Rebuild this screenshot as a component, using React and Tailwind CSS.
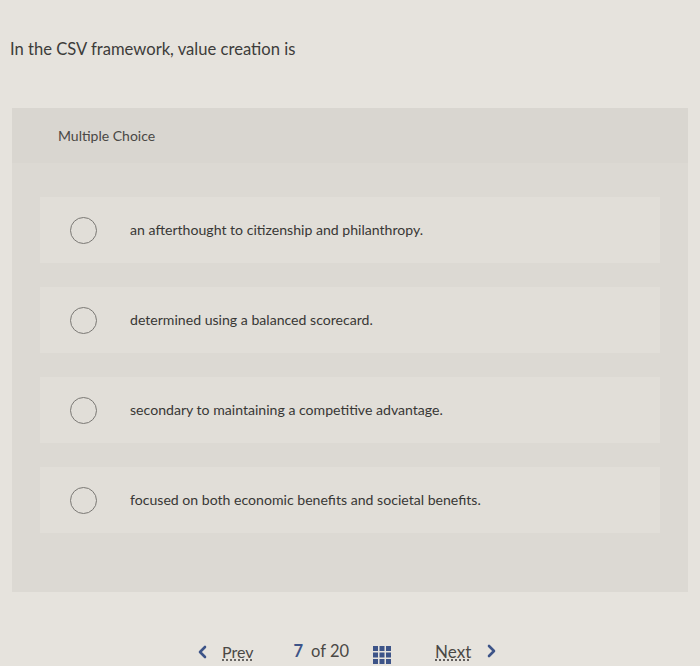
import React from 'react';

const options = [
  'an afterthought to citizenship and philanthropy.',
  'determined using a balanced scorecard.',
  'secondary to maintaining a competitive advantage.',
  'focused on both economic benefits and societal benefits.',
];

const Radio = () => (
  <span className="w-[27px] h-[27px] rounded-full border-[1.5px] border-[#7a7874] shrink-0" />
);

const Chevron = ({ dir }) => (
  <svg width="9" height="14" viewBox="0 0 9 14" fill="none" stroke="#3d5488" strokeWidth="2.6" strokeLinecap="round" strokeLinejoin="round">
    {dir === 'left' ? <path d="M7 2 L2 7 L7 12" /> : <path d="M2 2 L7 7 L2 12" />}
  </svg>
);

const GridIcon = () => (
  <svg width="18" height="18" viewBox="0 0 18 18" fill="#3d5488">
    {[0, 1, 2].map((r) =>
      [0, 1, 2].map((c) => (
        <rect key={`${r}-${c}`} x={c * 6.5} y={r * 6.5} width="5" height="5" />
      ))
    )}
  </svg>
);

const App = () => {
  return (
    <div className="w-[700px] h-[666px] overflow-hidden bg-[#e6e3dd] text-[#3c3b39] flex flex-col" style={{ fontFamily: 'Lato, "Open Sans", sans-serif' }}>
      <div className="pt-[37px] pl-[10px] h-[108px] text-[16.6px] text-[#3d3c3a]">
        In the CSV framework, value creation is
      </div>

      <div className="mx-[12px] w-[676px] h-[484px] bg-[#dcd9d3] flex flex-col">
        <div className="h-[55px] pl-[46px] flex items-center bg-[#d9d6d0] text-[14px] text-[#4a4845]">
          Multiple Choice
        </div>
        <div className="flex flex-col gap-[24px] pt-[34px] px-[28px]">
          {options.map((opt, i) => (
            <div key={i} className="h-[66px] bg-[#e1ded8] flex items-center pl-[30px]">
              <Radio />
              <span className="ml-[33px] text-[14.1px] text-[#383735]">{opt}</span>
            </div>
          ))}
        </div>
      </div>

      <div className="flex-1 flex items-end pb-[2px] pl-[198px] text-[#4a4845]">
        <div className="flex items-center gap-[15px]">
          <Chevron dir="left" />
          <span className="text-[16px] underline decoration-dotted underline-offset-2">Prev</span>
        </div>
        <div className="ml-[40px] flex items-center gap-[8px] text-[16.5px]">
          <span className="font-bold text-[#3d5488]">7</span>
          <span>of 20</span>
        </div>
        <div className="ml-[24px] flex items-center">
          <GridIcon />
        </div>
        <div className="ml-[44px] flex items-center gap-[16px]">
          <span className="text-[17px] underline decoration-dotted underline-offset-2">Next</span>
          <Chevron dir="right" />
        </div>
      </div>
    </div>
  );
};

export default App;
